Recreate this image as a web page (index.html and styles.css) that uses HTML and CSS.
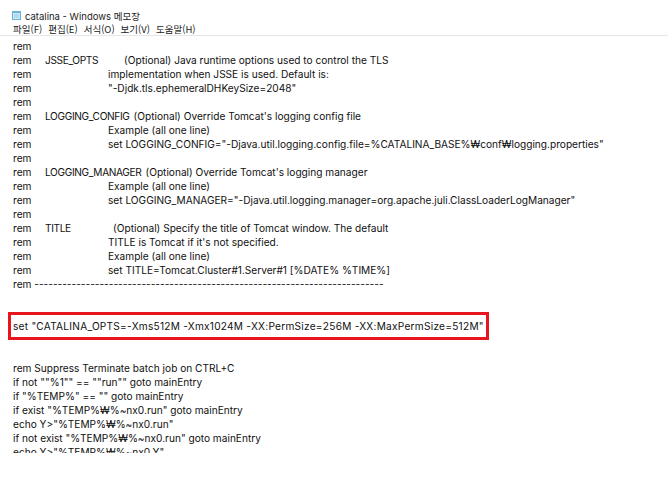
FILE: index.html
```
<!DOCTYPE html>
<html lang="ko">
<head>
  <meta charset="UTF-8" />
  <title>catalina - Windows 메모장</title>
  <link rel="stylesheet" href="styles.css">
</head>
<body>
  <div class="window">
    <div class="titlebar">
      <svg class="app-icon" width="9" height="9" viewBox="0 0 9 9">
        <rect x="0.5" y="0.5" width="8" height="8" fill="#c9e7f6" stroke="#6fb2d8"/>
        <rect x="0.5" y="0.5" width="8" height="1.5" fill="#6fb2d8"/>
        <line x1="2" y1="4" x2="7" y2="4" stroke="#9ccfea"/>
        <line x1="2" y1="6" x2="7" y2="6" stroke="#9ccfea"/>
      </svg>
      <span class="title">catalina - Windows 메모장</span>
    </div>
    <div class="menubar">
      <span>파일(F)</span>
      <span>편집(E)</span>
      <span>서식(O)</span>
      <span>보기(V)</span>
      <span>도움말(H)</span>
    </div>
    <div class="editor">
      <div class="ln">rem</div>
      <div class="ln"><span class="rem">rem</span><span class="key">JSSE_OPTS</span>(Optional) Java runtime options used to control the TLS</div>
      <div class="ln"><span class="rem">rem</span><span class="cont">implementation when JSSE is used. Default is:</span></div>
      <div class="ln"><span class="rem">rem</span><span class="cont">"-Djdk.tls.ephemeralDHKeySize=2048"</span></div>
      <div class="ln">rem</div>
      <div class="ln"><span class="rem">rem</span><span class="key">LOGGING_CONFIG</span>(Optional) Override Tomcat's logging config file</div>
      <div class="ln"><span class="rem">rem</span><span class="cont">Example (all one line)</span></div>
      <div class="ln"><span class="rem">rem</span><span class="cont">set LOGGING_CONFIG="-Djava.util.logging.config.file=%CATALINA_BASE%₩conf₩logging.properties"</span></div>
      <div class="ln">rem</div>
      <div class="ln"><span class="rem">rem</span><span class="key">LOGGING_MANAGER</span>(Optional) Override Tomcat's logging manager</div>
      <div class="ln"><span class="rem">rem</span><span class="cont">Example (all one line)</span></div>
      <div class="ln"><span class="rem">rem</span><span class="cont">set LOGGING_MANAGER="-Djava.util.logging.manager=org.apache.juli.ClassLoaderLogManager"</span></div>
      <div class="ln">rem</div>
      <div class="ln"><span class="rem">rem</span><span class="key short">TITLE</span>(Optional) Specify the title of Tomcat window. The default</div>
      <div class="ln"><span class="rem">rem</span><span class="cont">TITLE is Tomcat if it's not specified.</span></div>
      <div class="ln"><span class="rem">rem</span><span class="cont">Example (all one line)</span></div>
      <div class="ln"><span class="rem">rem</span><span class="cont">set TITLE=Tomcat.Cluster#1.Server#1 [%DATE% %TIME%]</span></div>
      <div class="ln">rem ---------------------------------------------------------------------------</div>
      <div class="ln"></div>
      <div class="ln"></div>
      <div class="ln"><span class="mark">set "CATALINA_OPTS=-Xms512M -Xmx1024M -XX:PermSize=256M -XX:MaxPermSize=512M"</span></div>
      <div class="ln"></div>
      <div class="ln"></div>
      <div class="ln">rem Suppress Terminate batch job on CTRL+C</div>
      <div class="ln">if not ""%1"" == ""run"" goto mainEntry</div>
      <div class="ln">if "%TEMP%" == "" goto mainEntry</div>
      <div class="ln">if exist "%TEMP%₩%~nx0.run" goto mainEntry</div>
      <div class="ln">echo Y&gt;"%TEMP%₩%~nx0.run"</div>
      <div class="ln">if not exist "%TEMP%₩%~nx0.run" goto mainEntry</div>
      <div class="ln">echo Y&gt;"%TEMP%₩%~nx0.Y"</div>
    </div>
  </div>
</body>
</html>
```

FILE: styles.css
```
body {
  margin: 0;
  background: #fff;
  font-family: Inter, "Noto Sans CJK KR", sans-serif;
  color: #111;
}

.window {
  width: 668px;
  height: 479px;
  overflow: hidden;
}

.titlebar {
  display: flex;
  align-items: center;
  gap: 4px;
  height: 24px;
  padding: 7px 0 0 12px;
  box-sizing: border-box;
}

.title {
  font-family: Inter, "Noto Sans CJK KR", sans-serif;
  font-size: 9.5px;
  color: #222;
}

.menubar {
  display: flex;
  gap: 6px;
  height: 11px;
  padding-left: 13px;
  font-family: "Noto Sans CJK KR", sans-serif;
  font-size: 9.5px;
  line-height: 11px;
  color: #222;
}

.editor {
  border-top: 1px solid #e6e6e6;
  height: 418px;
  box-sizing: border-box;
  overflow: hidden;
  padding: 3px 0 0 13px;
  font-size: 10.15px;
  line-height: 14px;
}

.ln {
  height: 14px;
  white-space: pre;
}

.rem {
  display: inline-block;
  width: 32px;
}

.key {
  display: inline-block;
  min-width: 75px;
  padding-right: 4px;
  letter-spacing: -0.35px;
}

.key.short {
  min-width: 64px;
}

.cont {
  margin-left: 63px;
}

.mark {
  position: relative;
  letter-spacing: 0.25px;
}

.mark::before {
  content: "";
  position: absolute;
  left: -5px;
  right: -5px;
  top: -8px;
  bottom: -8px;
  border: 3px solid #e8141e;
}
```
